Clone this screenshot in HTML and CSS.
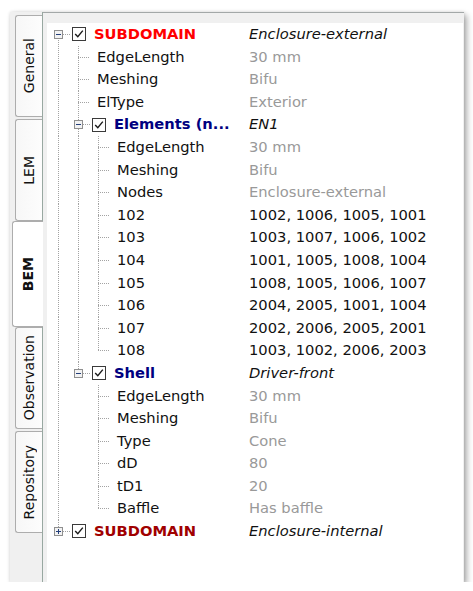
FILE: index.html
```html
<!DOCTYPE html>
<html>
<head>
<meta charset="utf-8">
<link rel="stylesheet" href="styles.css">
</head>
<body>
<div class="window">
  <div class="tabs">
    <div class="tab"><span class="tab-label">General</span></div>
    <div class="tab"><span class="tab-label">LEM</span></div>
    <div class="tab active"><span class="tab-label">BEM</span></div>
    <div class="tab"><span class="tab-label">Observation</span></div>
    <div class="tab"><span class="tab-label">Repository</span></div>
  </div>
  <div class="panel">
    <div class="tree">
      <div class="row">
        <div class="lead">
          <span class="exp down"><svg class="box" width="9" height="9" viewBox="0 0 9 9"><rect x="0.5" y="0.5" width="8" height="8" fill="#f2f2f2" stroke="#8f8f8f"/><path d="M2 4.5h5" stroke="#243f7a"/></svg></span>
          <svg class="chk" width="14" height="14" viewBox="0 0 14 14"><rect x="0.5" y="0.5" width="13" height="13" fill="#fff" stroke="#3a3a3a"/><path d="M3.2 7L5.8 9.8L10.8 3.6" fill="none" stroke="#1a1a1a" stroke-width="1.4"/></svg>
          <span class="name bold red">SUBDOMAIN</span>
        </div>
        <span class="val it">Enclosure-external</span>
      </div>

      <div class="row"><div class="lead"><span class="g v"></span><span class="leaf tee"></span><span class="name">EdgeLength</span></div><span class="val gray">30 mm</span></div>
      <div class="row"><div class="lead"><span class="g v"></span><span class="leaf tee"></span><span class="name">Meshing</span></div><span class="val gray">Bifu</span></div>
      <div class="row"><div class="lead"><span class="g v"></span><span class="leaf tee"></span><span class="name">ElType</span></div><span class="val gray">Exterior</span></div>

      <div class="row">
        <div class="lead">
          <span class="g v"></span>
          <span class="exp up down"><svg class="box" width="9" height="9" viewBox="0 0 9 9"><rect x="0.5" y="0.5" width="8" height="8" fill="#f2f2f2" stroke="#8f8f8f"/><path d="M2 4.5h5" stroke="#243f7a"/></svg></span>
          <svg class="chk" width="14" height="14" viewBox="0 0 14 14"><rect x="0.5" y="0.5" width="13" height="13" fill="#fff" stroke="#3a3a3a"/><path d="M3.2 7L5.8 9.8L10.8 3.6" fill="none" stroke="#1a1a1a" stroke-width="1.4"/></svg>
          <span class="name bold navy">Elements (n...</span>
        </div>
        <span class="val it">EN1</span>
      </div>

      <div class="row"><div class="lead"><span class="g v"></span><span class="g v"></span><span class="leaf tee"></span><span class="name">EdgeLength</span></div><span class="val gray">30 mm</span></div>
      <div class="row"><div class="lead"><span class="g v"></span><span class="g v"></span><span class="leaf tee"></span><span class="name">Meshing</span></div><span class="val gray">Bifu</span></div>
      <div class="row"><div class="lead"><span class="g v"></span><span class="g v"></span><span class="leaf tee"></span><span class="name">Nodes</span></div><span class="val gray">Enclosure-external</span></div>
      <div class="row"><div class="lead"><span class="g v"></span><span class="g v"></span><span class="leaf tee"></span><span class="name">102</span></div><span class="val">1002, 1006, 1005, 1001</span></div>
      <div class="row"><div class="lead"><span class="g v"></span><span class="g v"></span><span class="leaf tee"></span><span class="name">103</span></div><span class="val">1003, 1007, 1006, 1002</span></div>
      <div class="row"><div class="lead"><span class="g v"></span><span class="g v"></span><span class="leaf tee"></span><span class="name">104</span></div><span class="val">1001, 1005, 1008, 1004</span></div>
      <div class="row"><div class="lead"><span class="g v"></span><span class="g v"></span><span class="leaf tee"></span><span class="name">105</span></div><span class="val">1008, 1005, 1006, 1007</span></div>
      <div class="row"><div class="lead"><span class="g v"></span><span class="g v"></span><span class="leaf tee"></span><span class="name">106</span></div><span class="val">2004, 2005, 1001, 1004</span></div>
      <div class="row"><div class="lead"><span class="g v"></span><span class="g v"></span><span class="leaf tee"></span><span class="name">107</span></div><span class="val">2002, 2006, 2005, 2001</span></div>
      <div class="row"><div class="lead"><span class="g v"></span><span class="g v"></span><span class="leaf end"></span><span class="name">108</span></div><span class="val">1003, 1002, 2006, 2003</span></div>

      <div class="row">
        <div class="lead">
          <span class="g v"></span>
          <span class="exp up"><svg class="box" width="9" height="9" viewBox="0 0 9 9"><rect x="0.5" y="0.5" width="8" height="8" fill="#f2f2f2" stroke="#8f8f8f"/><path d="M2 4.5h5" stroke="#243f7a"/></svg></span>
          <svg class="chk" width="14" height="14" viewBox="0 0 14 14"><rect x="0.5" y="0.5" width="13" height="13" fill="#fff" stroke="#3a3a3a"/><path d="M3.2 7L5.8 9.8L10.8 3.6" fill="none" stroke="#1a1a1a" stroke-width="1.4"/></svg>
          <span class="name bold navy">Shell</span>
        </div>
        <span class="val it">Driver-front</span>
      </div>

      <div class="row"><div class="lead"><span class="g v"></span><span class="g"></span><span class="leaf tee"></span><span class="name">EdgeLength</span></div><span class="val gray">30 mm</span></div>
      <div class="row"><div class="lead"><span class="g v"></span><span class="g"></span><span class="leaf tee"></span><span class="name">Meshing</span></div><span class="val gray">Bifu</span></div>
      <div class="row"><div class="lead"><span class="g v"></span><span class="g"></span><span class="leaf tee"></span><span class="name">Type</span></div><span class="val gray">Cone</span></div>
      <div class="row"><div class="lead"><span class="g v"></span><span class="g"></span><span class="leaf tee"></span><span class="name">dD</span></div><span class="val gray">80</span></div>
      <div class="row"><div class="lead"><span class="g v"></span><span class="g"></span><span class="leaf tee"></span><span class="name">tD1</span></div><span class="val gray">20</span></div>
      <div class="row"><div class="lead"><span class="g v"></span><span class="g"></span><span class="leaf end"></span><span class="name">Baffle</span></div><span class="val gray">Has baffle</span></div>

      <div class="row">
        <div class="lead">
          <span class="exp up"><svg class="box" width="9" height="9" viewBox="0 0 9 9"><rect x="0.5" y="0.5" width="8" height="8" fill="#f2f2f2" stroke="#8f8f8f"/><path d="M2 4.5h5M4.5 2v5" stroke="#243f7a"/></svg></span>
          <svg class="chk" width="14" height="14" viewBox="0 0 14 14"><rect x="0.5" y="0.5" width="13" height="13" fill="#fff" stroke="#3a3a3a"/><path d="M3.2 7L5.8 9.8L10.8 3.6" fill="none" stroke="#1a1a1a" stroke-width="1.4"/></svg>
          <span class="name bold maroon">SUBDOMAIN</span>
        </div>
        <span class="val it">Enclosure-internal</span>
      </div>
    </div>
  </div>
</div>
</body>
</html>
```
FILE: styles.css
```css
html, body {
  margin: 0;
  padding: 0;
  background: #ffffff;
}

body {
  font-family: "DejaVu Sans", Verdana, sans-serif;
  font-size: 14.7px;
  color: #111;
}

.window {
  margin: 12px 0 0 10px;
  width: 454px;
  height: 570px;
  display: flex;
  box-shadow: 3px 3px 6px rgba(0, 0, 0, 0.32), 0 0 3px rgba(0, 0, 0, 0.12);
  background: #f0f0f0;
}

/* vertical tab strip */
.tabs {
  width: 32px;
  flex: none;
  background: #f0f0f0;
  border-right: 1px solid #98a8a1;
  display: flex;
  flex-direction: column;
  gap: 2px;
  padding-top: 3px;
}

.tab {
  box-sizing: border-box;
  margin-left: 5px;
  width: 27px;
  height: 102px;
  background: linear-gradient(to right, #f7f7f7, #fdfdfd);
  border: 1px solid #adadad;
  border-right: none;
  border-radius: 3px 0 0 3px;
  display: flex;
  align-items: center;
  justify-content: center;
  font-size: 14px;
  color: #111;
}

.tab.active {
  margin-left: 2px;
  margin-right: -1px;
  width: 31px;
  height: 106px;
  margin-top: -2px;
  margin-bottom: -2px;
  background: #ffffff;
  font-weight: bold;
  position: relative;
  z-index: 1;
}

.tab-label {
  writing-mode: vertical-rl;
  transform: rotate(180deg);
  white-space: nowrap;
}

/* content panel */
.panel {
  flex: 1;
  border-top: 1px solid #a3a8a8;
  padding: 10px 1px 0 4px;
  display: flex;
  flex-direction: column;
}

.tree {
  flex: 1;
  background: #ffffff;
}

.row {
  display: flex;
  align-items: center;
  height: 22.6px;
  line-height: 22.6px;
  white-space: nowrap;
}

.lead {
  width: 202px;
  flex: none;
  display: flex;
  align-items: center;
  height: 100%;
  overflow: hidden;
}

.val {
  flex: 1;
}

.name {
  flex: none;
}

.bold { font-weight: bold; }
.red { color: #ff0000; }
.navy { color: #000080; }
.maroon { color: #a00000; }
.it { font-style: italic; color: #111; }
.gray { color: #999999; }

/* tree guide lines */
.g, .leaf, .exp {
  --dv: repeating-linear-gradient(to bottom, #a3a3a3 0 1px, transparent 1px 2px);
  --dh: repeating-linear-gradient(to right, #a3a3a3 0 1px, transparent 1px 2px);
  flex: none;
  height: 100%;
  background-repeat: no-repeat;
}

.g {
  width: 20px;
}

.g.v {
  background-image: var(--dv);
  background-size: 1px 100%;
  background-position: 11px 0;
}

.leaf {
  width: 30px;
}

.leaf.tee {
  background-image: var(--dh), var(--dv);
  background-size: 12px 1px, 1px 100%;
  background-position: 11px 11px, 11px 0;
}

.leaf.end {
  background-image: var(--dh), var(--dv);
  background-size: 12px 1px, 1px 11px;
  background-position: 11px 11px, 11px 0;
}

.exp {
  width: 25px;
  display: flex;
  align-items: center;
  box-sizing: border-box;
  padding-left: 7px;
  background-image: var(--dh);
  background-size: 8px 1px;
  background-position: 16px 11px;
}

.exp.down {
  background-image: var(--dh), var(--dv);
  background-size: 8px 1px, 1px 50%;
  background-position: 16px 11px, 11px 100%;
}

.exp.up {
  background-image: var(--dh), var(--dv);
  background-size: 8px 1px, 1px 50%;
  background-position: 16px 11px, 11px 0;
}

.exp.up.down {
  background-image: var(--dh), var(--dv);
  background-size: 8px 1px, 1px 100%;
  background-position: 16px 11px, 11px 0;
}

.box {
  display: block;
  background: #fff;
}

.chk {
  display: block;
  flex: none;
  margin-right: 8px;
}
```
